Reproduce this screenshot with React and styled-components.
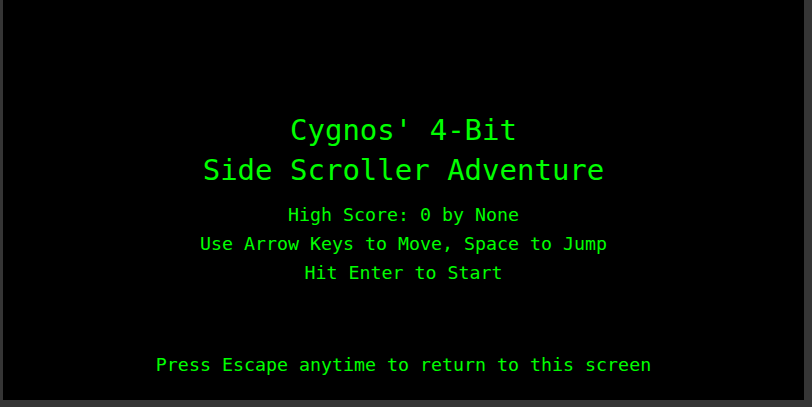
import React from "react";
import styled, { createGlobalStyle } from "styled-components";

const GlobalStyle = createGlobalStyle`
  html, body {
    margin: 0;
    padding: 0;
    background: #000;
  }
  body {
    font-family: "DejaVu Sans Mono", "Liberation Mono", monospace;
  }
`;

const Frame = styled.div`
  width: 812px;
  height: 407px;
  box-sizing: border-box;
  background: #000;
  border-left: 3px solid #353535;
  border-right: 8px solid #353535;
  border-bottom: 7px solid #353535;
  display: flex;
  flex-direction: column;
  align-items: center;
  padding-top: 110px;
  color: #00ff00;
  font-family: "DejaVu Sans Mono", "Liberation Mono", monospace;
  overflow: hidden;
`;

const Title = styled.h1`
  margin: 0;
  font-weight: normal;
  font-size: 29px;
  line-height: 40px;
  text-align: center;
  white-space: nowrap;
`;

const Info = styled.div`
  margin-top: 10px;
  display: flex;
  flex-direction: column;
  align-items: center;
`;

const Line = styled.p`
  margin: 0;
  font-size: 18.3px;
  line-height: 29px;
  text-align: center;
  white-space: nowrap;
`;

const Footer = styled(Line)`
  margin-top: 63px;
`;

export default function App() {
  return (
    <>
      <GlobalStyle />
      <Frame>
        <Title>
          Cygnos' 4-Bit
          <br />
          Side Scroller Adventure
        </Title>
        <Info>
          <Line>High Score: 0 by None</Line>
          <Line>Use Arrow Keys to Move, Space to Jump</Line>
          <Line>Hit Enter to Start</Line>
        </Info>
        <Footer>Press Escape anytime to return to this screen</Footer>
      </Frame>
    </>
  );
}
